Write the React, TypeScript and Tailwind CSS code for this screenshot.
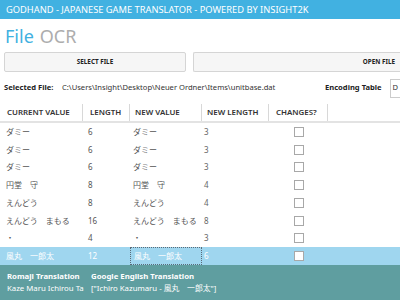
const rows = [
  { cur: 'ダミー', len: '6', nv: 'ダミー', nl: '3' },
  { cur: 'ダミー', len: '6', nv: 'ダミー', nl: '3' },
  { cur: 'ダミー', len: '6', nv: 'ダミー', nl: '3' },
  { cur: '円堂　守', len: '8', nv: '円堂　守', nl: '4' },
  { cur: 'えんどう', len: '8', nv: 'えんどう', nl: '4' },
  { cur: 'えんどう　まもる', len: '16', nv: 'えんどう　まもる', nl: '8' },
  { cur: '・', len: '4', nv: '・', nl: '3' },
];

const font = { fontFamily: '"Noto Sans", "Noto Sans CJK JP", sans-serif' };

export default function App() {
  return (
    <div className="w-[400px] h-[300px] overflow-hidden bg-white flex flex-col text-[#333]" style={font}>
      <div className="h-[19px] bg-[#41b1e1] text-white text-[9.3px] leading-[19px] pl-[6px] whitespace-nowrap">
        GODHAND - JAPANESE GAME TRANSLATOR - POWERED BY INSIGHT2K
      </div>
      <div className="h-[31px] flex items-center gap-[6px] pl-[5px] text-[18px] leading-none pt-[2px]">
        <span className="text-[#41b1e1]">File</span>
        <span className="text-[#adadad]">OCR</span>
      </div>
      <div className="flex gap-[7px] pl-[4px] h-[20px] mt-[2px]">
        <div className="w-[182px] border border-[#d5d5d5] bg-[#f6f6f6] rounded-[2px] flex items-center justify-center text-[6.3px] font-bold text-[#222]">
          SELECT FILE
        </div>
        <div className="flex-1 border border-[#d5d5d5] border-r-0 bg-[#f6f6f6] rounded-l-[2px] flex items-center justify-end pr-[5px] text-[6.3px] font-bold text-[#222]">
          OPEN FILE
        </div>
      </div>
      <div className="h-[32px] flex items-center pl-[4px] text-[7.6px] whitespace-nowrap">
        <span className="font-bold text-[#222] w-[58px]">Selected File:</span>
        <span className="text-[#333] w-[263px]">C:\Users\Insight\Desktop\Neuer Ordner\Items\unitbase.dat</span>
        <span className="font-bold text-[#222]">Encoding Table</span>
        <span className="ml-[8px] h-[19px] flex-1 border border-[#ccc] border-r-0 pl-[2px] flex items-center text-[#333]">D</span>
      </div>
      <div className="flex h-[19px] border-b-2 border-[#e3e3e3] text-[7.9px] font-semibold text-[#333] items-center">
        <div className="w-[83px] pl-[7px] h-full flex items-center border-r border-[#d8d8d8]">CURRENT VALUE</div>
        <div className="w-[47px] pl-[7px] h-full flex items-center border-r border-[#d8d8d8]">LENGTH</div>
        <div className="w-[72px] pl-[5px] h-full flex items-center border-r border-[#d8d8d8]">NEW VALUE</div>
        <div className="w-[67px] pl-[5px] h-full flex items-center border-r border-[#d8d8d8]">NEW LENGTH</div>
        <div className="w-[59px] pl-[7px] h-full flex items-center border-r border-[#d8d8d8]">CHANGES?</div>
      </div>
      <div className="flex flex-col text-[8px] text-[#555]">
        {rows.map((r, i) => (
          <div key={i} className="flex h-[17.75px] items-center">
            <div className="w-[83px] pl-[6px] whitespace-nowrap">{r.cur}</div>
            <div className="w-[47px] pl-[5px]">{r.len}</div>
            <div className="w-[72px] pl-[3px] whitespace-nowrap">{r.nv}</div>
            <div className="w-[67px] pl-[2px] text-[#666]">{r.nl}</div>
            <div className="w-[59px] flex justify-center">
              <div className="w-[10px] h-[10px] border border-[#a8a8a8] bg-white" />
            </div>
          </div>
        ))}
        <div className="flex h-[18px] items-center bg-[#9fd6ef] text-white">
          <div className="w-[83px] pl-[6px] whitespace-nowrap">風丸　一郎太</div>
          <div className="w-[47px] pl-[5px]">12</div>
          <div className="w-[72px] h-full pl-[3px] flex items-center whitespace-nowrap border border-dotted border-[#5a6b78]">風丸　一郎太</div>
          <div className="w-[67px] pl-[2px]">6</div>
          <div className="w-[59px] flex justify-center">
            <div className="w-[10px] h-[10px] border border-[#a8a8a8] bg-white" />
          </div>
        </div>
      </div>
      <div className="flex-1 bg-[#5f9ea0] text-white text-[7.8px] pt-[5px] pl-[7px] whitespace-nowrap">
        <div className="flex font-bold leading-[12px]">
          <span className="w-[84px]">Romaji Translation</span>
          <span>Google English Translation</span>
        </div>
        <div className="flex leading-[12px]">
          <span className="w-[84px] overflow-hidden">Kaze Maru Ichirou Ta</span>
          <span>["Ichiro Kazumaru - 風丸　一郎太"]</span>
        </div>
      </div>
    </div>
  );
}
